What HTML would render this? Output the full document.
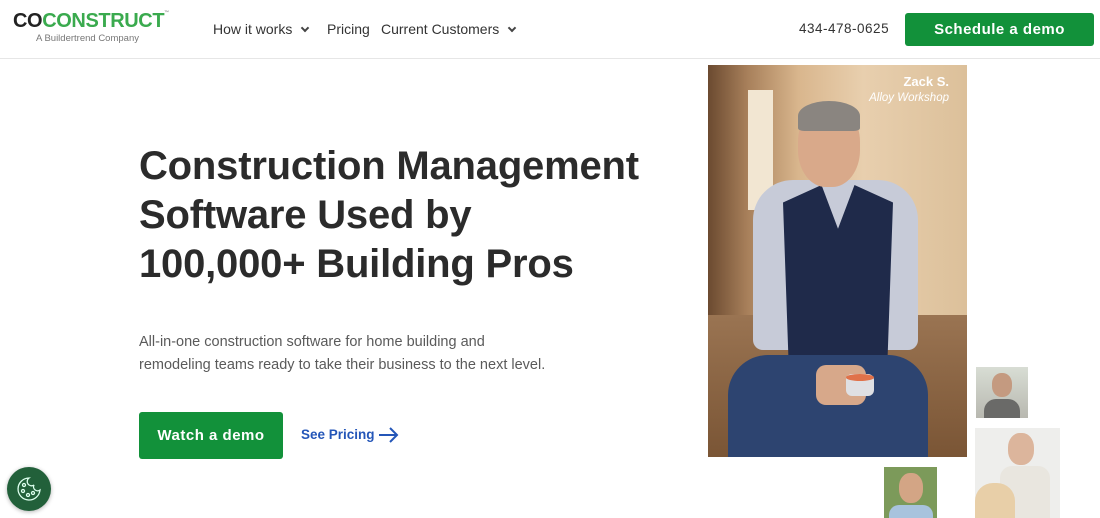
<!DOCTYPE html>
<html><head><style>
*{margin:0;padding:0;box-sizing:border-box}
body{width:1100px;height:518px;overflow:hidden;background:#fff;font-family:"Liberation Sans",sans-serif;position:relative}
.hdr{position:absolute;left:0;top:0;width:1100px;height:59px;border-bottom:1px solid #e6e6e6}
.abs{position:absolute}
.nav{font-size:14px;color:#333;top:21px}
.chev{display:inline-block;width:6px;height:6px;border-right:2px solid #444;border-bottom:2px solid #444;transform:rotate(45deg);margin-left:10px;position:relative;top:-3px}
.btn{background:#12913a;color:#fff;font-weight:bold;border-radius:3px;text-align:center}
</style></head><body>
<div class="hdr">
 <div class="abs" style="left:13px;top:10px;font-size:20px;font-weight:bold;letter-spacing:-0.4px"><span style="color:#222">CO</span><span style="color:#3aaa4e">CONSTRUCT</span><span style="font-size:5px;color:#999;vertical-align:top">™</span></div>
 <div class="abs" style="left:36px;top:33px;font-size:9.5px;color:#777">A Buildertrend Company</div>
 <div class="abs nav" style="left:213px">How it works<span class="chev"></span></div>
 <div class="abs nav" style="left:327px">Pricing</div>
 <div class="abs nav" style="left:381px">Current Customers<span class="chev"></span></div>
 <div class="abs" style="left:799px;top:21px;font-size:13.5px;color:#333;letter-spacing:0.5px">434-478-0625</div>
 <div class="abs btn" style="left:905px;top:13px;width:189px;height:33px;line-height:33px;font-size:15px;letter-spacing:0.5px">Schedule a demo</div>
</div>
<div class="abs" style="left:139px;top:142px;font-size:40px;font-weight:bold;line-height:49px;color:#2b2b2b;letter-spacing:-0.2px">Construction Management<br>Software Used by<br>100,000+ Building Pros</div>
<div class="abs" style="left:139px;top:331px;font-size:14.5px;line-height:23px;color:#5a5a5a">All-in-one construction software for home building and<br>remodeling teams ready to take their business to the next level.</div>
<div class="abs btn" style="left:139px;top:412px;width:144px;height:47px;line-height:47px;font-size:15px;letter-spacing:0.5px">Watch a demo</div>
<div class="abs" style="left:301px;top:427px;font-size:13.5px;font-weight:bold;color:#2456b8">See Pricing</div>
<svg class="abs" style="left:378px;top:426px" width="22" height="18" viewBox="0 0 22 18"><path d="M1 9H19M12 2L19 9L12 16" fill="none" stroke="#2456b8" stroke-width="2"/></svg>
<div class="abs" style="left:7px;top:467px;width:44px;height:44px;border-radius:50%;background:#22603a;box-shadow:0 1px 4px rgba(0,0,0,.3)"></div>
<svg class="abs" style="left:15px;top:475px" width="28" height="28" viewBox="0 0 28 28" fill="none" stroke="#dfe" stroke-width="1.3"><path d="M14 3A11 11 0 1 0 25 15A4 4 0 0 1 19 10A4 4 0 0 1 14 3Z"/><circle cx="9" cy="10" r="1.5"/><circle cx="8" cy="16" r="1.5"/><circle cx="13" cy="20" r="1.5"/><circle cx="18" cy="18" r="1.5"/></svg>
<div class="abs" style="left:708px;top:65px;width:259px;height:392px;overflow:hidden;background:linear-gradient(90deg,#6b4a30 0%,#a77f5a 15%,#d9b68d 35%,#e8cfae 60%,#dcc09a 100%)">
 <div class="abs" style="left:0;top:250px;width:259px;height:142px;background:linear-gradient(180deg,#9a7452,#7a5535)"></div>
 <div class="abs" style="left:40px;top:25px;width:25px;height:120px;background:#f2e6d2"></div>
 <div class="abs" style="left:45px;top:115px;width:165px;height:170px;border-radius:40px 40px 10px 10px;background:#c7cbd8"></div>
 <div class="abs" style="left:75px;top:120px;width:110px;height:175px;background:#1f2a4a;clip-path:polygon(0 10%,35% 0,50% 25%,65% 0,100% 10%,95% 100%,5% 100%)"></div>
 <div class="abs" style="left:90px;top:40px;width:62px;height:82px;border-radius:45%;background:#d9a98a"></div>
 <div class="abs" style="left:90px;top:36px;width:62px;height:30px;border-radius:50% 50% 10% 10%;background:#8a8580"></div>
 <div class="abs" style="left:20px;top:290px;width:200px;height:102px;border-radius:40px 40px 0 0;background:#2d4470"></div>
 <div class="abs" style="left:108px;top:300px;width:50px;height:40px;border-radius:10px;background:#d7a88a"></div>
 <div class="abs" style="left:138px;top:309px;width:28px;height:22px;border-radius:6px;background:#dfe0e3"></div>
 <div class="abs" style="left:138px;top:309px;width:28px;height:7px;border-radius:50%;background:#e0724a"></div>
 <div class="abs" style="right:18px;top:9px;color:#fff;font-weight:bold;font-size:13px;text-align:right">Zack S.</div>
 <div class="abs" style="right:18px;top:27px;color:#fff;font-style:italic;font-size:11.5px">Alloy Workshop</div>
</div>
<div class="abs" style="left:976px;top:367px;width:52px;height:51px;background:linear-gradient(180deg,#d8ddd4,#b8b8b0)"><div class="abs" style="left:16px;top:6px;width:20px;height:24px;border-radius:45%;background:#c49a80"></div><div class="abs" style="left:8px;top:32px;width:36px;height:19px;border-radius:12px 12px 0 0;background:#6a6a68"></div></div>
<div class="abs" style="left:975px;top:428px;width:85px;height:90px;background:#eeeeec"><div class="abs" style="left:33px;top:5px;width:26px;height:32px;border-radius:45%;background:#dcb59c"></div><div class="abs" style="left:25px;top:38px;width:50px;height:52px;border-radius:12px 12px 0 0;background:#e9e6df"></div><div class="abs" style="left:0;top:55px;width:40px;height:35px;border-radius:18px 18px 0 0;background:#e8cfa8"></div></div>
<div class="abs" style="left:884px;top:467px;width:53px;height:51px;background:#7c9a5a"><div class="abs" style="left:15px;top:6px;width:24px;height:30px;border-radius:45%;background:#d3a585"></div><div class="abs" style="left:5px;top:38px;width:44px;height:13px;border-radius:10px 10px 0 0;background:#a8c3dd"></div></div>
</body></html>
